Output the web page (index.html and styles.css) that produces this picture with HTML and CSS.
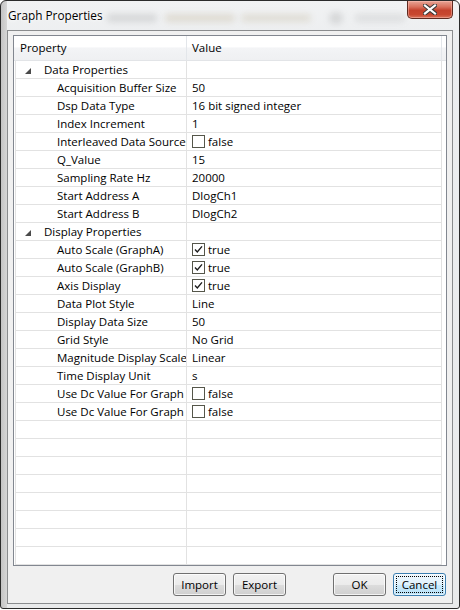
FILE: index.html
```html
<!DOCTYPE html>
<html>
<head>
<meta charset="utf-8">
<title>Graph Properties</title>
<link rel="stylesheet" href="styles.css">
</head>
<body>
<div class="window">
  <div class="titlebar">
    <span class="title">Graph Properties</span>
    <div class="ghost">
      <span class="g g1"></span><span class="g g2"></span><span class="g g3"></span><span class="g g4"></span><span class="g g5"></span>
    </div>
    <div class="close">
      <svg width="14" height="11" viewBox="0 0 14 11">
        <path d="M2 1.5 L12 9.5 M12 1.5 L2 9.5" stroke="#3a3a3a" stroke-width="4.2" stroke-linecap="square"/>
        <path d="M2 1.5 L12 9.5 M12 1.5 L2 9.5" stroke="#ffffff" stroke-width="2.2" stroke-linecap="square"/>
      </svg>
    </div>
  </div>
  <div class="client">
    <div class="grid">
      <div class="head">
        <div class="hc c1">Property</div>
        <div class="hc c2">Value</div>
        <div class="hc c3"></div>
      </div>
      <div class="rows">
        <div class="row group"><div class="cell name"><svg class="tri" width="6" height="6" viewBox="0 0 6 6"><polygon points="6,0 6,6 0,6" fill="#4a4a4a"/></svg>Data Properties</div><div class="cell val"></div></div>
        <div class="row"><div class="cell name">Acquisition Buffer Size</div><div class="cell val">50</div></div>
        <div class="row"><div class="cell name">Dsp Data Type</div><div class="cell val">16 bit signed integer</div></div>
        <div class="row"><div class="cell name">Index Increment</div><div class="cell val">1</div></div>
        <div class="row"><div class="cell name">Interleaved Data Sources</div><div class="cell val"><span class="cb"></span>false</div></div>
        <div class="row"><div class="cell name">Q_Value</div><div class="cell val">15</div></div>
        <div class="row"><div class="cell name">Sampling Rate Hz</div><div class="cell val">20000</div></div>
        <div class="row"><div class="cell name">Start Address A</div><div class="cell val">DlogCh1</div></div>
        <div class="row"><div class="cell name">Start Address B</div><div class="cell val">DlogCh2</div></div>
        <div class="row group"><div class="cell name"><svg class="tri" width="6" height="6" viewBox="0 0 6 6"><polygon points="6,0 6,6 0,6" fill="#4a4a4a"/></svg>Display Properties</div><div class="cell val"></div></div>
        <div class="row"><div class="cell name">Auto Scale (GraphA)</div><div class="cell val"><span class="cb"><svg width="11" height="11" viewBox="0 0 11 11"><path d="M2 5.6 L4.3 8 L9 2.4" fill="none" stroke="#1c1c1c" stroke-width="1.4"/></svg></span>true</div></div>
        <div class="row"><div class="cell name">Auto Scale (GraphB)</div><div class="cell val"><span class="cb"><svg width="11" height="11" viewBox="0 0 11 11"><path d="M2 5.6 L4.3 8 L9 2.4" fill="none" stroke="#1c1c1c" stroke-width="1.4"/></svg></span>true</div></div>
        <div class="row"><div class="cell name">Axis Display</div><div class="cell val"><span class="cb"><svg width="11" height="11" viewBox="0 0 11 11"><path d="M2 5.6 L4.3 8 L9 2.4" fill="none" stroke="#1c1c1c" stroke-width="1.4"/></svg></span>true</div></div>
        <div class="row"><div class="cell name">Data Plot Style</div><div class="cell val">Line</div></div>
        <div class="row"><div class="cell name">Display Data Size</div><div class="cell val">50</div></div>
        <div class="row"><div class="cell name">Grid Style</div><div class="cell val">No Grid</div></div>
        <div class="row"><div class="cell name">Magnitude Display Scale</div><div class="cell val">Linear</div></div>
        <div class="row"><div class="cell name">Time Display Unit</div><div class="cell val">s</div></div>
        <div class="row"><div class="cell name">Use Dc Value For Graph A</div><div class="cell val"><span class="cb"></span>false</div></div>
        <div class="row"><div class="cell name">Use Dc Value For Graph B</div><div class="cell val"><span class="cb"></span>false</div></div>
        <div class="row"><div class="cell name"></div><div class="cell val"></div></div>
        <div class="row"><div class="cell name"></div><div class="cell val"></div></div>
        <div class="row"><div class="cell name"></div><div class="cell val"></div></div>
        <div class="row"><div class="cell name"></div><div class="cell val"></div></div>
        <div class="row"><div class="cell name"></div><div class="cell val"></div></div>
        <div class="row"><div class="cell name"></div><div class="cell val"></div></div>
        <div class="row"><div class="cell name"></div><div class="cell val"></div></div>
        <div class="row"><div class="cell name"></div><div class="cell val"></div></div>
      </div>
    </div>
    <div class="buttons">
      <button class="btn">Import</button>
      <button class="btn wide">Export</button>
      <button class="btn">OK</button>
      <button class="btn focus">Cancel</button>
    </div>
  </div>
</div>
</body>
</html>
```

FILE: styles.css
```css
* { box-sizing: border-box; }
html, body { margin: 0; padding: 0; }
body {
  width: 460px;
  height: 610px;
  background: #ffffff;
  font-family: "Open Sans", "Noto Sans", sans-serif;
  font-size: 11.5px;
  color: #000;
  overflow: hidden;
}

.window {
  width: 460px;
  height: 609px;
  border: 1px solid #2b2b2b;
  border-radius: 6px 6px 3px 3px;
  background:
    linear-gradient(90deg, #c4c4c4 0, #d6d6d6 6px, rgba(0,0,0,0) 6px),
    linear-gradient(180deg, #f1f2f3 0, #eceef0 40px, #e9eaeb 100%);
  display: flex;
  flex-direction: column;
  overflow: hidden;
}

.titlebar {
  height: 29px;
  flex: none;
  display: flex;
  align-items: flex-start;
  padding-left: 7px;
}
.title {
  line-height: 28px;
  font-size: 11.8px;
  color: #000;
  text-shadow: 0 0 6px #fff, 0 0 3px #fff;
  white-space: nowrap;
}
.ghost {
  flex: 1;
  display: flex;
  align-items: center;
  height: 29px;
  padding-top: 4px;
  padding-left: 4px;
}
.g {
  display: block;
  height: 8px;
  border-radius: 4px;
  filter: blur(3px);
}
.g1 { width: 50px; background: rgba(90, 90, 90, 0.16); }
.g2 { width: 70px; margin-left: 8px; background: rgba(150, 120, 60, 0.17); }
.g3 { width: 70px; margin-left: 6px; background: rgba(150, 120, 60, 0.15); }
.g4 { width: 14px; height: 12px; margin-left: 18px; background: rgba(90, 90, 90, 0.16); border-radius: 6px; }
.g5 { width: 50px; margin-left: 12px; background: rgba(110, 110, 110, 0.13); }

.close {
  flex: none;
  width: 46px;
  height: 18px;
  margin-right: 6px;
  border: 1px solid #5e2a20;
  border-top: none;
  border-radius: 0 0 5px 5px;
  background: linear-gradient(180deg, #e8a596 0, #d8705c 35%, #c4412c 55%, #c8472f 80%, #d9735b 100%);
  box-shadow: inset 0 0 0 1px rgba(255, 200, 190, 0.45);
  display: flex;
  align-items: center;
  justify-content: center;
}
.close svg { display: block; }

.client {
  flex: none;
  height: 574px;
  margin: 0 6px;
  border: 1px solid #8a8c8e;
  background: #f0f0f0;
  padding: 4px 5px 0 5px;
  display: flex;
  flex-direction: column;
}

.grid {
  flex: none;
  height: 531px;
  border: 1px solid #828790;
  background: #fff;
  display: flex;
  flex-direction: column;
  overflow: hidden;
}

.head {
  flex: none;
  height: 25px;
  display: flex;
  padding-left: 1px;
  border-bottom: 1px solid #e2e4e7;
  background: linear-gradient(180deg, #ffffff 0, #ffffff 45%, #f3f4f6 50%, #eff0f2 100%);
}
.hc {
  line-height: 24px;
  white-space: nowrap;
}
.c1 { width: 172px; padding-left: 5px; border-right: 1px solid #e3e6ea; }
.c2 { width: 255px; padding-left: 5px; border-right: 1px solid #e3e6ea; }
.c3 { flex: 1; }

.rows {
  flex: none;
  margin: 0 4px 0 1px;
  border-left: 1px solid #e2e2e2;
}
.row {
  display: grid;
  grid-template-columns: 171px 255px;
  height: 18px;
  border-bottom: 1px solid #e2e2e2;
}
.cell {
  line-height: 17px;
  white-space: nowrap;
  overflow: hidden;
  display: flex;
  align-items: center;
}
.name {
  padding-left: 41px;
  border-right: 1px solid #e2e2e2;
}
.group .name { padding-left: 9px; }
.tri {
  display: block;
  flex: none;
  margin-right: 13px;
  margin-top: 2px;
}
.val {
  padding-left: 5px;
  border-right: 1px solid #e2e2e2;
}
.cb {
  flex: none;
  width: 13px;
  height: 13px;
  border: 1px solid #55564a;
  background: #fff;
  margin-right: 3px;
  display: flex;
  align-items: center;
  justify-content: center;
}
.cb svg { display: block; }

.buttons {
  flex: none;
  display: flex;
  justify-content: flex-end;
  gap: 7px;
  margin-top: 7px;
  padding-right: 1px;
}
.btn {
  width: 53px;
  height: 23px;
  padding: 0;
  margin: 0;
  font-family: inherit;
  font-size: 11.5px;
  color: #000;
  border: 1px solid #707070;
  border-radius: 3px;
  background: linear-gradient(180deg, #f2f2f2 0, #ebebeb 50%, #dddddd 50%, #cfcfcf 100%);
  box-shadow: inset 0 0 0 1px rgba(255, 255, 255, 0.75);
}
.btn.wide { margin-right: 40px; }
.btn.focus {
  border-color: #3c7fb1;
  background: linear-gradient(180deg, #eef7fd 0, #e1f2fc 50%, #cbebfd 50%, #b7e0f6 100%);
  box-shadow: inset 0 0 0 1px rgba(255, 255, 255, 0.6);
  outline: 1px dotted #000;
  outline-offset: -4px;
}
```
